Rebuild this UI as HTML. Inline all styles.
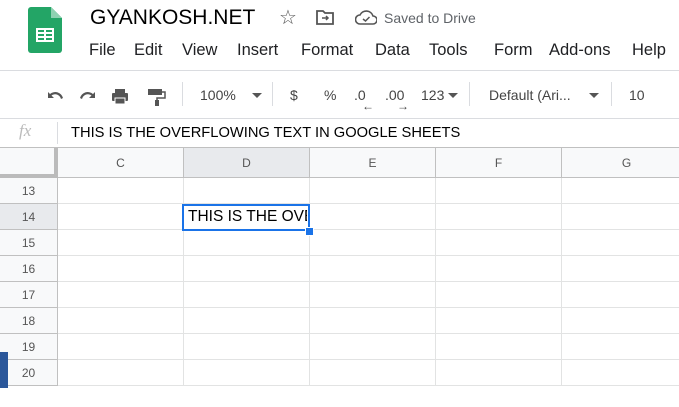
<!DOCTYPE html><html><head><style>
body{margin:0;width:679px;height:407px;background:#fff;font-family:"Liberation Sans",Arial,sans-serif;position:relative;overflow:hidden}
.a{position:absolute}
.m{position:absolute;top:41px;font-size:16.5px;color:#202124}
.tb{color:#444;font-size:14px}
.rh{position:absolute;left:0;width:58px;height:26px;background:#f8f9fa;border-bottom:1px solid #c0c0c0;border-right:1px solid #c0c0c0;box-sizing:border-box;text-align:center;line-height:26px;font-size:12px;color:#555}
.hl{position:absolute;left:58px;width:621px;height:1px;background:#e2e3e3}
.vl{position:absolute;top:178px;height:208px;width:1px;background:#e2e3e3}
.ch{position:absolute;top:148px;height:30px;background:#f8f9fa;border-right:1px solid #c0c0c0;border-bottom:1px solid #c0c0c0;box-sizing:border-box;text-align:center;line-height:30px;font-size:12px;color:#555}
</style></head><body>
<svg class="a" style="left:28px;top:7px" width="34" height="46" viewBox="0 0 34 46"><path d="M3 0h20l11 11v32a3 3 0 0 1-3 3H3a3 3 0 0 1-3-3V3a3 3 0 0 1 3-3z" fill="#23a566"/><path d="M23 0v11h11z" fill="#8ed1b1"/><rect x="8" y="21" width="18" height="14" fill="#fff"/><g fill="#23a566"><rect x="10" y="23" width="6" height="2"/><rect x="18" y="23" width="6" height="2"/><rect x="10" y="27" width="6" height="2"/><rect x="18" y="27" width="6" height="2"/><rect x="10" y="31" width="6" height="2"/><rect x="18" y="31" width="6" height="2"/></g></svg>
<div class="a" style="left:90px;top:6px;font-size:21px;color:#000">GYANKOSH.NET</div>
<div class="a" style="left:279px;top:5px;font-size:20px;color:#555">☆</div>
<svg class="a" style="left:316px;top:10px" width="18" height="15"><path d="M1 1h6l2 2h8v11H1z" fill="none" stroke="#555" stroke-width="1.8"/><path d="M6 8h6M10 6l2 2-2 2" stroke="#555" stroke-width="1.5" fill="none"/></svg>
<svg class="a" style="left:355px;top:10px" width="22" height="15"><path d="M5 14h13a4 4 0 0 0 0-8 7 7 0 0 0-13-1 4.5 4.5 0 0 0 0 9z" fill="none" stroke="#555" stroke-width="1.6"/><path d="M8 9l2.5 2 4-4" stroke="#555" stroke-width="1.5" fill="none"/></svg>
<div class="a" style="left:384px;top:10px;font-size:14px;color:#5f6368">Saved to Drive</div>
<div class="m" style="left:89px">File</div><div class="m" style="left:134px">Edit</div><div class="m" style="left:182px">View</div><div class="m" style="left:237px">Insert</div><div class="m" style="left:301px">Format</div><div class="m" style="left:375px">Data</div><div class="m" style="left:429px">Tools</div><div class="m" style="left:494px">Form</div><div class="m" style="left:549px">Add-ons</div><div class="m" style="left:632px">Help</div>
<div class="a" style="left:0;top:70px;width:679px;height:1px;background:#dadce0"></div>
<div class="a" style="left:0;top:118px;width:679px;height:1px;background:#dadce0"></div>
<svg class="a" style="left:44px;top:86px" width="130" height="20" fill="#555"><path d="M4 6v6h6L7.5 9.5A6 6 0 0 1 17 13l2-1A8 8 0 0 0 6 8z"/><path d="M51 6v6h-6l2.5-2.5A6 6 0 0 0 38 13l-2-1a8 8 0 0 1 13-4z"/><rect x="71" y="3" width="10" height="4"/><rect x="68" y="7" width="16" height="8" rx="1"/><rect x="71" y="12" width="10" height="6" fill="#555" stroke="#fff" stroke-width="1"/><rect x="104" y="3" width="14" height="6"/><path d="M118 6h3v6h-8v3" fill="none" stroke="#555" stroke-width="1.5"/><rect x="111" y="14" width="4" height="6"/></svg>
<div class="a" style="left:182px;top:82px;width:1px;height:24px;background:#dadce0"></div>
<div class="a tb" style="left:200px;top:87px">100%</div>
<div class="a" style="left:252px;top:93px;border:5px solid transparent;border-top-color:#555"></div>
<div class="a" style="left:272px;top:82px;width:1px;height:24px;background:#dadce0"></div>
<div class="a tb" style="left:290px;top:87px">$</div>
<div class="a tb" style="left:324px;top:87px">%</div>
<div class="a tb" style="left:354px;top:87px">.0</div>
<div class="a tb" style="left:385px;top:87px">.00</div>
<div class="a" style="left:362px;top:99px;font-size:12px;color:#444;font-weight:bold">←</div>
<div class="a" style="left:397px;top:99px;font-size:12px;color:#444;font-weight:bold">→</div>
<div class="a tb" style="left:421px;top:87px">123</div>
<div class="a" style="left:448px;top:93px;border:5px solid transparent;border-top-color:#555"></div>
<div class="a" style="left:469px;top:82px;width:1px;height:24px;background:#dadce0"></div>
<div class="a tb" style="left:489px;top:87px">Default (Ari...</div>
<div class="a" style="left:589px;top:93px;border:5px solid transparent;border-top-color:#555"></div>
<div class="a" style="left:611px;top:82px;width:1px;height:24px;background:#dadce0"></div>
<div class="a tb" style="left:629px;top:87px">10</div>
<div class="a" style="left:19px;top:121px;font-size:17px;font-style:italic;color:#bbb;font-family:'Liberation Serif',serif">fx</div>
<div class="a" style="left:57px;top:122px;width:1px;height:22px;background:#dadce0"></div>
<div class="a" style="left:71px;top:125px;font-size:14.7px;color:#000">THIS IS THE OVERFLOWING TEXT IN GOOGLE SHEETS</div>
<div class="a" style="left:0;top:147px;width:679px;height:1px;background:#c0c0c0"></div>
<div class="ch" style="left:0;width:58px;border-right:4px solid #bbb;border-bottom:4px solid #bbb"></div>
<div class="ch" style="left:58px;width:126px">C</div>
<div class="ch" style="left:184px;width:126px;background:#e8eaed">D</div>
<div class="ch" style="left:310px;width:126px">E</div>
<div class="ch" style="left:436px;width:126px">F</div>
<div class="ch" style="left:562px;width:130px">G</div>
<div class="rh" style="top:178px">13</div>
<div class="rh" style="top:204px;background:#e8eaed">14</div>
<div class="rh" style="top:230px">15</div>
<div class="rh" style="top:256px">16</div>
<div class="rh" style="top:282px">17</div>
<div class="rh" style="top:308px">18</div>
<div class="rh" style="top:334px">19</div>
<div class="rh" style="top:360px">20</div>
<div class="hl" style="top:203px"></div><div class="hl" style="top:229px"></div><div class="hl" style="top:255px"></div><div class="hl" style="top:281px"></div><div class="hl" style="top:307px"></div><div class="hl" style="top:333px"></div><div class="hl" style="top:359px"></div><div class="hl" style="top:385px"></div>
<div class="vl" style="left:183px"></div><div class="vl" style="left:309px"></div><div class="vl" style="left:435px"></div><div class="vl" style="left:561px"></div>
<div class="a" style="left:0;top:352px;width:8px;height:36px;background:#2b579a"></div>
<div class="a" style="left:188px;top:208px;font-size:15.5px;color:#000;width:119px;overflow:hidden;white-space:nowrap">THIS IS THE OVERFLOWING</div>
<div class="a" style="left:182px;top:204px;width:128px;height:27px;border:2px solid #1a73e8;box-sizing:border-box"></div>
<div class="a" style="left:305px;top:227px;width:7px;height:7px;background:#1a73e8;border:1px solid #fff"></div>
</body></html>
